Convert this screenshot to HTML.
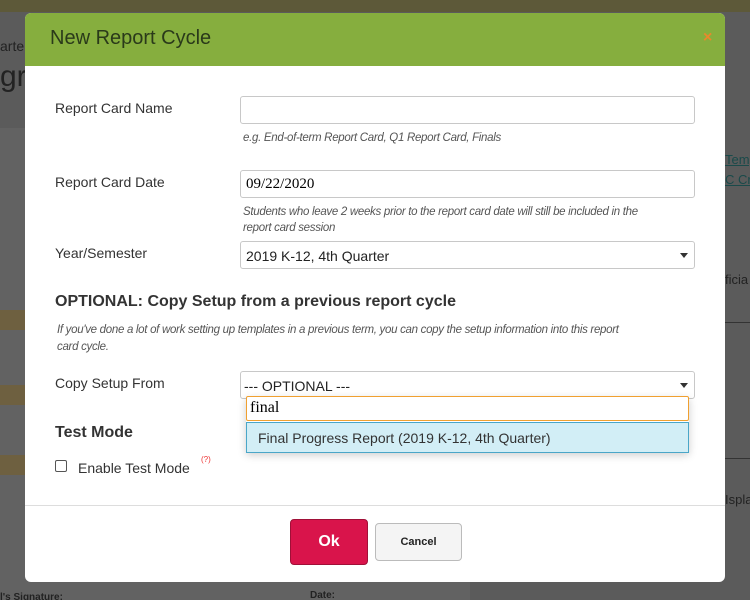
<!DOCTYPE html>
<html><head><style>
html,body{margin:0;width:750px;height:600px;overflow:hidden;background:#5b5b5b}
body{font-family:"Liberation Sans",sans-serif;position:relative}
.a{position:absolute}
.lbl{position:absolute;left:55px;font-size:14px;color:#333}
.inp{position:absolute;left:240px;width:455px;height:28px;border:1px solid #c8c8c8;border-radius:3px;background:#fff;box-sizing:border-box}
.hint{position:absolute;left:243px;font-size:11.5px;font-style:italic;color:#555;line-height:16px;white-space:nowrap;letter-spacing:-0.3px}
.arrow{position:absolute;right:6px;top:11px;width:0;height:0;border-left:4px solid transparent;border-right:4px solid transparent;border-top:5px solid #333}
</style></head><body>
<div class="a" style="left:0;top:0;width:750px;height:600px;background:#5b5b5b"></div>
<div class="a" style="left:0;top:0;width:750px;height:12px;background:#5d5939"></div>
<div class="a" style="left:0;top:38px;font-size:14px;color:#222">arte</div>
<div class="a" style="left:0;top:60px;font-size:30px;color:#222">gre</div>
<div class="a" style="left:0;top:128px;width:470px;height:472px;background:#626262"></div>
<div class="a" style="left:0;top:310px;width:30px;height:20px;background:#6e6040"></div>
<div class="a" style="left:0;top:385px;width:30px;height:20px;background:#6e6040"></div>
<div class="a" style="left:0;top:455px;width:30px;height:20px;background:#6e6040"></div>
<div class="a" style="left:0;top:592px;font-size:10px;font-weight:bold;color:#222">l's Signature:</div>
<div class="a" style="left:310px;top:590px;font-size:10px;font-weight:bold;color:#222">Date:</div>
<div class="a" style="left:25px;top:13px;width:700px;height:569px;background:#fff;border-radius:6px;overflow:hidden">
 <div class="a" style="left:0;top:0;width:700px;height:53px;background:#86ae3e"></div>
 <div class="a" style="left:25px;top:14px;font-size:20px;color:#2a3a1a">New Report Cycle</div>
 <div class="a" style="left:678px;top:16px;font-size:16px;font-weight:bold;color:#e8892c">×</div>
 <div class="a" style="left:0;top:492px;width:700px;height:1px;background:#ddd"></div>
</div>
<div class="lbl" style="top:100px">Report Card Name</div>
<div class="inp" style="top:96px"></div>
<div class="hint" style="top:130px">e.g. End-of-term Report Card, Q1 Report Card, Finals</div>
<div class="lbl" style="top:174px">Report Card Date</div>
<div class="inp" style="top:170px;font-family:'Liberation Serif',serif;font-size:15px;padding:5px 0 0 5px">09/22/2020</div>
<div class="hint" style="top:204px">Students who leave 2 weeks prior to the report card date will still be included in the<br>report card session</div>
<div class="lbl" style="top:245px">Year/Semester</div>
<div class="inp" style="top:241px;font-size:14px;padding:6px 0 0 5px;color:#222">2019 K-12, 4th Quarter<div class="arrow"></div></div>
<div class="a" style="left:55px;top:293px;font-size:16px;font-weight:bold;color:#333">OPTIONAL: Copy Setup from a previous report cycle</div>
<div class="a" style="left:57px;top:322px;font-size:11.5px;font-style:italic;color:#555;line-height:17px;white-space:nowrap;letter-spacing:-0.3px">If you've done a lot of work setting up templates in a previous term, you can copy the setup information into this report<br>card cycle.</div>
<div class="lbl" style="top:375px">Copy Setup From</div>
<div class="inp" style="top:371px;font-size:14px;padding:6px 0 0 3px;color:#222">--- OPTIONAL ---<div class="arrow"></div></div>
<div class="a" style="left:246px;top:396px;width:443px;height:56px;box-shadow:0 3px 8px rgba(0,0,0,.2)"></div>
<div class="a" style="left:246px;top:396px;width:443px;height:25px;border:1px solid #f0a030;box-sizing:border-box;border-radius:2px;background:#fff;font-family:'Liberation Serif',serif;font-size:16px;padding:2px 0 0 3px">final</div>
<div class="a" style="left:246px;top:422px;width:443px;height:31px;border:1px solid #4aa6c8;box-sizing:border-box;background:#d2eef6;font-size:14px;color:#333;padding:7px 0 0 11px">Final Progress Report (2019 K-12, 4th Quarter)</div>
<div class="a" style="left:55px;top:424px;font-size:16px;font-weight:bold;color:#333">Test Mode</div>
<div class="a" style="left:55px;top:460px;width:12px;height:12px;border:1px solid #555;border-radius:2px;box-sizing:border-box"></div>
<div class="lbl" style="left:78px;top:460px">Enable Test Mode</div>
<div class="a" style="left:201px;top:455px;font-size:8px;color:#e33">(?)</div>
<div class="a" style="left:290px;top:519px;width:78px;height:46px;background:#d9144b;border:1px solid #a01038;border-radius:4px;box-sizing:border-box;color:#fff;font-weight:bold;font-size:16px;text-align:center;line-height:44px">Ok</div>
<div class="a" style="left:375px;top:523px;width:87px;height:38px;background:#f4f4f4;border:1px solid #bbb;border-radius:4px;box-sizing:border-box;color:#222;font-weight:bold;font-size:11px;text-align:center;line-height:36px">Cancel</div>
<div class="a" style="left:725px;top:150px;font-size:13px;color:#1a4a4a;text-decoration:underline;line-height:20px">Temp<br>C Cr</div>
<div class="a" style="left:725px;top:272px;font-size:13px;color:#222">ficia</div>
<div class="a" style="left:725px;top:492px;font-size:13px;color:#222">Ispla</div>
<div class="a" style="left:725px;top:322px;width:25px;height:1px;background:#333"></div>
<div class="a" style="left:725px;top:458px;width:25px;height:1px;background:#333"></div>
</body></html>
